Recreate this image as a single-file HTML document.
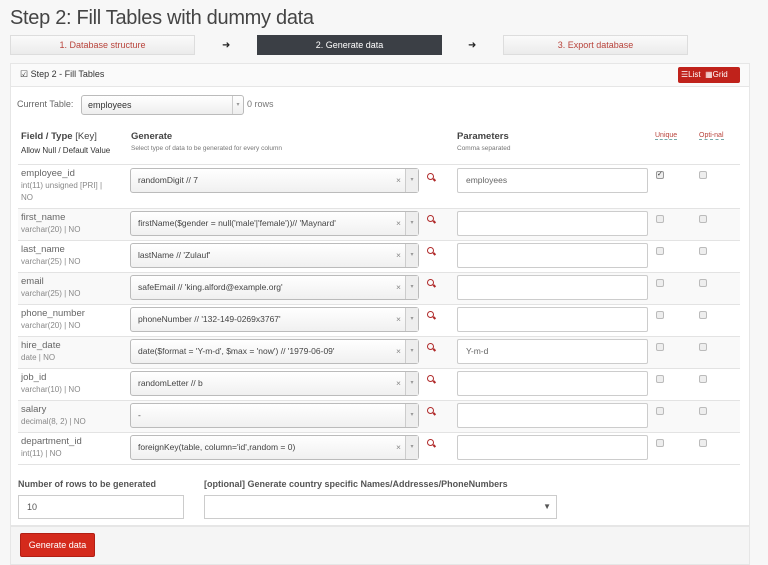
<!DOCTYPE html>
<html><head><style>
*{box-sizing:border-box;margin:0;padding:0}
body{width:768px;height:565px;background:#f7f7f7;font-family:"Liberation Sans",sans-serif;color:#555;position:relative;overflow:hidden;font-size:9px}
.a{position:absolute}
h1{position:absolute;left:10px;top:7px;font-size:20px;font-weight:normal;color:#444;letter-spacing:-0.3px}
.tab{position:absolute;top:35px;height:20px;width:185px;border:1px solid #ddd;background:linear-gradient(#fafafa,#ebebeb);text-align:center;line-height:19px;color:#b8433b;font-size:9px}
.tab.on{background:#3b3f45;color:#fff;border-color:#3b3f45}
.arr{position:absolute;top:40px;font-size:10px;color:#222}
.panel{position:absolute;left:10px;top:63px;width:740px;height:463px;background:#fff;border:1px solid #e6e6e6}
.row{position:absolute;left:18px;width:722px;border-top:1px solid #e3e3e3}
.fn{position:absolute;left:3px;top:3px;font-size:9.5px;color:#666}
.ft{position:absolute;left:3px;font-size:8px;color:#888;line-height:12px}
.sel{position:absolute;left:112px;top:2px;width:289px;height:25px;border:1px solid #bbb;border-radius:3px;background:linear-gradient(#fff,#f0f0f0);font-size:8.5px;color:#444;line-height:23px;padding-left:7px}
.sel .x{position:absolute;right:17px;top:0;color:#888}
.sel .d{position:absolute;right:0;top:0;width:13px;height:23px;border-left:1px solid #ccc;background:#eee;color:#999;text-align:center;font-size:6px}
.q{position:absolute;left:409px;top:6px;width:7px;height:7px;border:1.5px solid #b02a2a;border-radius:50%}
.q:after{content:"";position:absolute;left:5px;top:5px;width:3px;height:1.5px;background:#b02a2a;transform:rotate(45deg)}
.inp{position:absolute;left:439px;top:2px;width:191px;height:25px;border:1px solid #ccc;border-radius:2px;background:#fff;font-size:8.5px;color:#666;line-height:23px;padding-left:8px}
.cb{position:absolute;top:6px;width:8px;height:8px;border:1px solid #bbb;border-radius:2px;background:#eee}
.b{font-weight:bold;color:#444}
</style></head><body>
<h1>Step 2: Fill Tables with dummy data</h1>
<div class="tab" style="left:10px">1. Database structure</div>
<div class="arr" style="left:222px">➜</div>
<div class="tab on" style="left:257px">2. Generate data</div>
<div class="arr" style="left:468px">➜</div>
<div class="tab" style="left:503px">3. Export database</div>
<div class="panel"></div>
<div class="a" style="left:11px;top:64px;width:738px;height:23px;border-bottom:1px solid #e6e6e6;background:#fafafa"></div>
<div class="a" style="left:20px;top:69px;font-size:9px;color:#333">☑ Step 2 - Fill Tables</div>
<div class="a" style="left:678px;top:67px;width:62px;height:16px;background:#c0221b;border-radius:2px;color:#fff;font-size:8px;line-height:16px;padding-left:3px">☰List &nbsp;▦Grid</div>
<div class="a" style="left:17px;top:99px;font-size:9px;color:#666">Current Table:</div>
<div class="a" style="left:81px;top:95px;width:163px;height:20px;border:1px solid #bbb;border-radius:3px;background:linear-gradient(#fff,#eee);font-size:9px;color:#333;line-height:19px;padding-left:6px">employees<span style="position:absolute;right:0;top:0;width:11px;height:18px;border-left:1px solid #ccc;color:#999;font-size:6px;text-align:center">▾</span></div>
<div class="a" style="left:247px;top:99px;font-size:9px;color:#777">0 rows</div>
<div class="a b" style="left:21px;top:131px;font-size:9.5px">Field / Type <span style="font-weight:normal">[Key]</span></div>
<div class="a" style="left:21px;top:146px;font-size:8px;color:#333">Allow Null / Default Value</div>
<div class="a b" style="left:131px;top:131px;font-size:9.5px">Generate</div>
<div class="a" style="left:131px;top:145px;font-size:6.5px;color:#777">Select type of data to be generated for every column</div>
<div class="a b" style="left:457px;top:131px;font-size:9.5px">Parameters</div>
<div class="a" style="left:457px;top:145px;font-size:6.5px;color:#777">Comma separated</div>
<div class="a" style="left:655px;top:132px;font-size:7px;color:#b8433b;border-bottom:1px dashed #7aa">Unique</div>
<div class="a" style="left:699px;top:132px;font-size:7px;color:#b8433b;border-bottom:1px dashed #7aa">Opti-nal</div>

<div class="row" style="top:164px;height:44px"><div class="fn">employee_id</div><div class="ft" style="top:15px;width:100px">int(11) unsigned [PRI] |<br>NO</div><div class="sel" style="top:3px">randomDigit // 7<span class="x">×</span><span class="d">▾</span></div><div class="q" style="top:8px"></div><div class="inp" style="top:3px">employees</div><div class="cb" style="left:638px;border-color:#999;font-size:7px;line-height:6px;color:#333">✓</div><div class="cb" style="left:681px"></div></div>
<div class="row" style="top:208px;height:32px;background:#f9f9f9"><div class="fn">first_name</div><div class="ft" style="top:15px">varchar(20) | NO</div><div class="sel">firstName($gender = null('male'|'female'))// 'Maynard'<span class="x">×</span><span class="d">▾</span></div><div class="q"></div><div class="inp"></div><div class="cb" style="left:638px"></div><div class="cb" style="left:681px"></div></div>
<div class="row" style="top:240px;height:32px"><div class="fn">last_name</div><div class="ft" style="top:15px">varchar(25) | NO</div><div class="sel">lastName // 'Zulauf'<span class="x">×</span><span class="d">▾</span></div><div class="q"></div><div class="inp"></div><div class="cb" style="left:638px"></div><div class="cb" style="left:681px"></div></div>
<div class="row" style="top:272px;height:32px;background:#f9f9f9"><div class="fn">email</div><div class="ft" style="top:15px">varchar(25) | NO</div><div class="sel">safeEmail // 'king.alford@example.org'<span class="x">×</span><span class="d">▾</span></div><div class="q"></div><div class="inp"></div><div class="cb" style="left:638px"></div><div class="cb" style="left:681px"></div></div>
<div class="row" style="top:304px;height:32px"><div class="fn">phone_number</div><div class="ft" style="top:15px">varchar(20) | NO</div><div class="sel">phoneNumber // '132-149-0269x3767'<span class="x">×</span><span class="d">▾</span></div><div class="q"></div><div class="inp"></div><div class="cb" style="left:638px"></div><div class="cb" style="left:681px"></div></div>
<div class="row" style="top:336px;height:32px;background:#f9f9f9"><div class="fn">hire_date</div><div class="ft" style="top:15px">date | NO</div><div class="sel">date($format = 'Y-m-d', $max = 'now') // '1979-06-09'<span class="x">×</span><span class="d">▾</span></div><div class="q"></div><div class="inp">Y-m-d</div><div class="cb" style="left:638px"></div><div class="cb" style="left:681px"></div></div>
<div class="row" style="top:368px;height:32px"><div class="fn">job_id</div><div class="ft" style="top:15px">varchar(10) | NO</div><div class="sel">randomLetter // b<span class="x">×</span><span class="d">▾</span></div><div class="q"></div><div class="inp"></div><div class="cb" style="left:638px"></div><div class="cb" style="left:681px"></div></div>
<div class="row" style="top:400px;height:32px;background:#f9f9f9"><div class="fn">salary</div><div class="ft" style="top:15px">decimal(8, 2) | NO</div><div class="sel">-<span class="d">▾</span></div><div class="q"></div><div class="inp"></div><div class="cb" style="left:638px"></div><div class="cb" style="left:681px"></div></div>
<div class="row" style="top:432px;height:33px;border-bottom:1px solid #e3e3e3"><div class="fn">department_id</div><div class="ft" style="top:15px">int(11) | NO</div><div class="sel">foreignKey(table, column='id',random = 0)<span class="x">×</span><span class="d">▾</span></div><div class="q"></div><div class="inp"></div><div class="cb" style="left:638px"></div><div class="cb" style="left:681px"></div></div>

<div class="a b" style="left:18px;top:479px;font-size:9px;color:#555">Number of rows to be generated</div>
<div class="a b" style="left:204px;top:479px;font-size:9px;color:#555">[optional] Generate country specific Names/Addresses/PhoneNumbers</div>
<div class="a" style="left:18px;top:495px;width:166px;height:24px;border:1px solid #ccc;background:#fff;font-size:9px;color:#555;line-height:22px;padding-left:8px">10</div>
<div class="a" style="left:204px;top:495px;width:353px;height:24px;border:1px solid #ccc;background:#fff;font-size:8px;color:#555;line-height:22px;text-align:right;padding-right:5px">▼</div>
<div class="a" style="left:10px;top:526px;width:740px;height:39px;background:#f5f5f5;border:1px solid #e6e6e6"></div>
<div class="a" style="left:20px;top:533px;width:75px;height:24px;background:#d42a1c;border:1px solid #b11f14;border-radius:2px;color:#fff;font-size:9px;line-height:22px;text-align:center">Generate data</div>
</body></html>
